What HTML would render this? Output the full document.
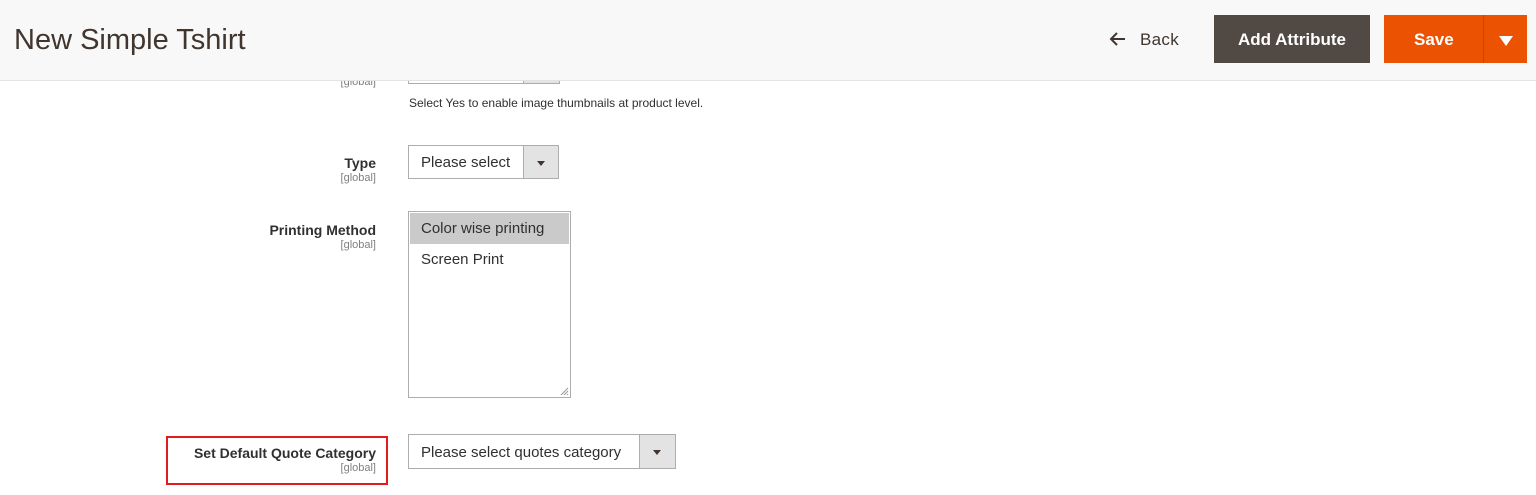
<!DOCTYPE html>
<html><head><meta charset="utf-8"><style>
*{box-sizing:border-box;margin:0;padding:0}
body{width:1536px;height:495px;overflow:hidden;background:#fff;font-family:"Liberation Sans",sans-serif;color:#303030;position:relative}
.hdr{position:absolute;left:0;top:0;width:1536px;height:81px;background:#f8f8f8;border-bottom:1px solid #e3e3e3;z-index:2}
.abs{position:absolute}
.lbl{position:absolute;right:1160px;text-align:right;font-weight:bold;font-size:14px;color:#303030;white-space:nowrap}
.g{position:absolute;right:1160px;font-size:11px;color:#808080}
.sel{position:absolute;border:1px solid #adadad;background:#fff;font-size:15px;color:#303030}
.sel .arr{position:absolute;right:0;top:0;bottom:0;width:35px;background:#e3e3e3;border-left:1px solid #adadad}
.sel .arr:after{content:"";position:absolute;left:13px;top:15px;border-left:4px solid transparent;border-right:4px solid transparent;border-top:5px solid #41362f}
</style></head><body>
<div class="hdr">
<div class="abs" style="left:14px;top:24px;font-size:29px;color:#41362f">New Simple Tshirt</div>
<svg class="abs" style="left:1109px;top:31px" width="18" height="16" viewBox="0 0 18 16"><path d="M8 2L2 8l6 6M2 8h14" stroke="#41362f" stroke-width="2" fill="none"/></svg>
<div class="abs" style="left:1140px;top:30px;font-size:17px;color:#41362f;letter-spacing:.3px">Back</div>
<div class="abs" style="left:1214px;top:15px;width:156px;height:48px;background:#514943;color:#fff;font-weight:bold;font-size:17px;text-align:center;line-height:49px">Add Attribute</div>
<div class="abs" style="left:1384px;top:15px;width:143px;height:48px;background:#eb5202;color:#fff;font-weight:bold;font-size:17px;line-height:49px">
<span style="position:absolute;left:30px">Save</span>
<div style="position:absolute;left:99px;top:0;width:1px;height:48px;background:#c94601"></div>
<div style="position:absolute;left:115px;top:21px;border-left:7px solid transparent;border-right:7px solid transparent;border-top:10px solid #fff"></div>
</div>
</div>
<div class="sel" style="left:408px;top:40px;width:152px;height:44px"><div class="arr" style="width:36px"></div></div>
<div class="g" style="top:76px">[global]</div>
<div class="abs" style="left:409px;top:96px;font-size:12px;color:#303030">Select Yes to enable image thumbnails at product level.</div>

<div class="lbl" style="top:155px">Type</div>
<div class="g" style="top:172px">[global]</div>
<div class="sel" style="left:408px;top:145px;width:151px;height:34px"><span style="position:absolute;left:12px;top:8px">Please select</span><div class="arr"></div></div>

<div class="lbl" style="top:222px">Printing Method</div>
<div class="g" style="top:239px">[global]</div>
<div class="sel" style="left:408px;top:211px;width:163px;height:187px">
<div style="position:absolute;left:1px;right:1px;top:1px;height:31px;background:#cacaca"></div>
<span style="position:absolute;left:12px;top:8px">Color wise printing</span>
<span style="position:absolute;left:12px;top:39px">Screen Print</span>
<svg style="position:absolute;right:1px;bottom:1px" width="10" height="10"><path d="M9 2L2 9M9 5L5 9M9 8L8 9" stroke="#999" stroke-width="1"/></svg>
</div>

<div class="abs" style="left:166px;top:436px;width:222px;height:49px;border:2px solid #e41b1b"></div>
<div class="lbl" style="top:445px">Set Default Quote Category</div>
<div class="g" style="top:462px">[global]</div>
<div class="sel" style="left:408px;top:434px;width:268px;height:35px"><span style="position:absolute;left:12px;top:9px">Please select quotes category</span><div class="arr" style="width:36px"></div></div>
</body></html>
